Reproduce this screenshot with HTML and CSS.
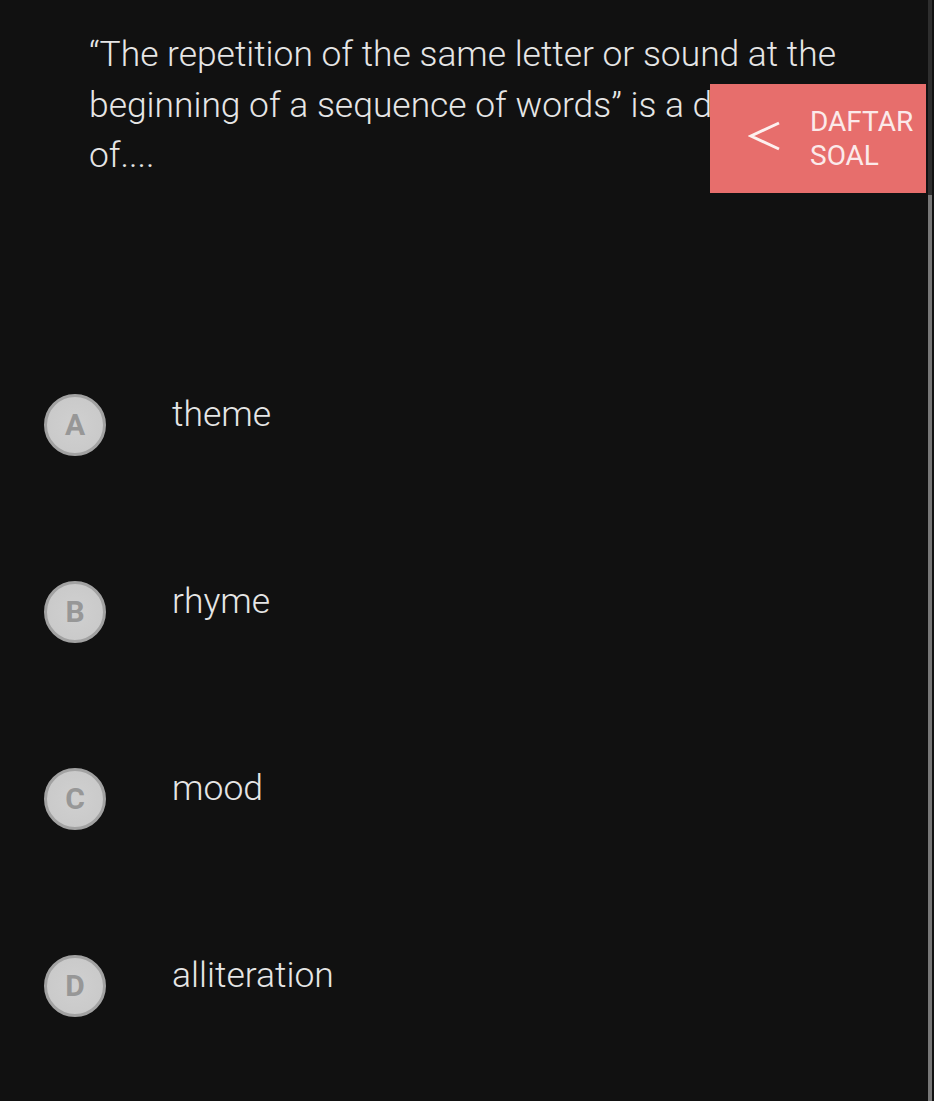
FILE: index.html
```html
<!DOCTYPE html>
<html>
<head>
<meta charset="utf-8">
<link rel="stylesheet" href="styles.css">
</head>
<body>
<div class="page">
  <div class="content">
    <p class="question">“The repetition of the same letter or sound at the beginning of a sequence of words” is a definition of....</p>
    <ul class="options">
      <li class="option"><span class="badge">A</span><span class="label">theme</span></li>
      <li class="option"><span class="badge">B</span><span class="label">rhyme</span></li>
      <li class="option"><span class="badge">C</span><span class="label">mood</span></li>
      <li class="option"><span class="badge">D</span><span class="label">alliteration</span></li>
    </ul>
  </div>
  <div class="scrollbar"><div class="thumb"></div></div>
  <button class="daftar">
    <svg class="chev" width="34" height="34" viewBox="0 0 34 34"><polyline points="31,4 3,17 31,30" fill="none" stroke="#fdf0ef" stroke-width="3"/></svg>
    <span class="daftar-text">DAFTAR<br>SOAL</span>
  </button>
</div>
</body>
</html>
```
FILE: styles.css
```css
html, body {
  margin: 0;
  padding: 0;
  background: #111111;
}
.page {
  position: relative;
  display: flex;
  width: 934px;
  height: 1101px;
  overflow: hidden;
  font-family: Roboto, "Liberation Sans", sans-serif;
}
.content {
  flex: 1;
  padding: 29px 0 0 89px;
}
.question {
  margin: 0;
  width: 780px;
  color: #e6e6e6;
  font-weight: 300;
  font-size: 35.4px;
  line-height: 50.5px;
}
.options {
  list-style: none;
  margin: 0;
  padding: 0;
  margin-top: 213px;
  margin-left: -45px;
}
.option {
  display: flex;
  align-items: center;
  height: 62px;
  margin-bottom: 125px;
}
.badge {
  width: 56px;
  height: 56px;
  border-radius: 50%;
  border: 3px solid #a2a2a2;
  background: radial-gradient(circle, #d0d0d0 0%, #cacaca 70%, #b4b4b4 100%);
  color: #979797;
  font-weight: 700;
  font-size: 30px;
  display: flex;
  align-items: center;
  justify-content: center;
  box-sizing: content-box;
  flex: none;
}
.label {
  margin-left: 66px;
  margin-top: -22px;
  color: #e6e6e6;
  font-weight: 300;
  font-size: 35.5px;
}
.scrollbar {
  width: 4px;
  margin-right: 2px;
  background: #2e2e2e;
  display: flex;
  flex-direction: column;
}
.thumb {
  margin-top: 195px;
  flex: 1;
  background: #777777;
}
.daftar {
  position: absolute;
  left: 710px;
  top: 84px;
  width: 216px;
  height: 109px;
  border: none;
  margin: 0;
  padding: 0 0 0 38px;
  background: #e76e6c;
  color: #fbeaea;
  display: flex;
  align-items: center;
  font-family: Roboto, "Liberation Sans", sans-serif;
  text-align: left;
}
.chev {
  margin-top: -6px;
  margin-right: 28px;
  flex: none;
}
.daftar-text {
  font-size: 28px;
  line-height: 34px;
  font-weight: 400;
}
```
